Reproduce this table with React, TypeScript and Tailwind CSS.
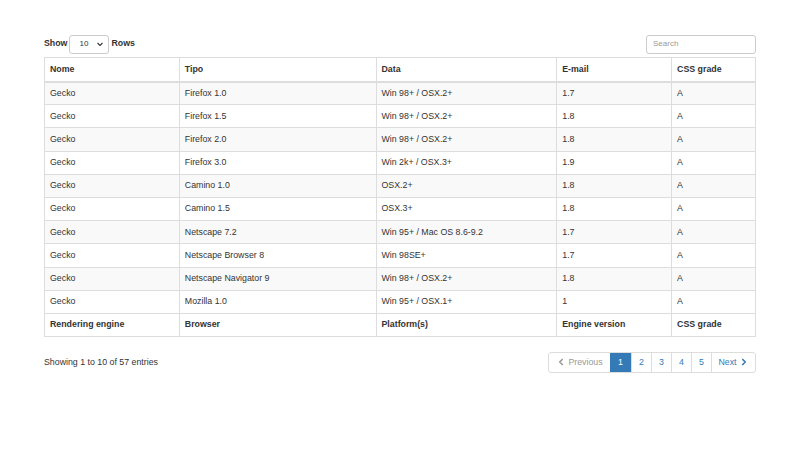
import React from "react";
import { ChevronLeft, ChevronRight } from "lucide-react";

const rows = [
  ["Gecko", "Firefox 1.0", "Win 98+ / OSX.2+", "1.7", "A"],
  ["Gecko", "Firefox 1.5", "Win 98+ / OSX.2+", "1.8", "A"],
  ["Gecko", "Firefox 2.0", "Win 98+ / OSX.2+", "1.8", "A"],
  ["Gecko", "Firefox 3.0", "Win 2k+ / OSX.3+", "1.9", "A"],
  ["Gecko", "Camino 1.0", "OSX.2+", "1.8", "A"],
  ["Gecko", "Camino 1.5", "OSX.3+", "1.8", "A"],
  ["Gecko", "Netscape 7.2", "Win 95+ / Mac OS 8.6-9.2", "1.7", "A"],
  ["Gecko", "Netscape Browser 8", "Win 98SE+", "1.7", "A"],
  ["Gecko", "Netscape Navigator 9", "Win 98+ / OSX.2+", "1.8", "A"],
  ["Gecko", "Mozilla 1.0", "Win 95+ / OSX.1+", "1", "A"],
];

const head = ["Nome", "Tipo", "Data", "E-mail", "CSS grade"];
const foot = ["Rendering engine", "Browser", "Platform(s)", "Engine version", "CSS grade"];
const widths = ["w-[135px]", "w-[197px]", "w-[181px]", "w-[115px]", "w-[84px]"];

export default function App() {
  return (
    <div className="w-[800px] h-[450px] bg-white text-[#333] text-[8.8px] font-['Liberation_Sans',Arial,sans-serif]">
      <div className="px-[44px] pt-[35px]">
        {/* --- top controls --- */}
        <div className="flex items-center justify-between h-[18px]">
          <div className="flex items-center gap-[2px] font-bold">
            <span>Show</span>
            <div className="flex items-center justify-between w-[40px] h-[19px] border border-[#ccc] rounded-[3px] pl-[9px] pr-[4px] font-normal text-[8px]">
              <span>10</span>
              <svg width="8" height="8" viewBox="0 0 8 8">
                <path d="M1.5 3 L4 5.5 L6.5 3" fill="none" stroke="#333" strokeWidth="1.1" />
              </svg>
            </div>
            <span>Rows</span>
          </div>
          <div className="w-[110px] h-[19px] border border-[#ccc] rounded-[3px] flex items-center px-[6px] text-[8px] text-[#999]">
            Search
          </div>
        </div>

        {/* --- table --- */}
        <table className="mt-[4px] border-collapse border border-[#ddd]">
          <thead>
            <tr className="h-[24px]">
              {head.map((h, i) => (
                <th key={i} className={`${widths[i]} border border-[#ddd] border-b-2 px-[5px] text-left font-bold`}>
                  {h}
                </th>
              ))}
            </tr>
          </thead>
          <tbody>
            {rows.map((r, ri) => (
              <tr key={ri} className={`h-[23.2px] ${ri % 2 === 0 ? "bg-[#f9f9f9]" : "bg-white"}`}>
                {r.map((c, ci) => (
                  <td key={ci} className="border border-[#ddd] px-[5px]">
                    {c}
                  </td>
                ))}
              </tr>
            ))}
          </tbody>
          <tfoot>
            <tr className="h-[23px]">
              {foot.map((f, i) => (
                <th key={i} className="border border-[#ddd] px-[5px] text-left font-bold">
                  {f}
                </th>
              ))}
            </tr>
          </tfoot>
        </table>

        {/* --- bottom info + pagination --- */}
        <div className="mt-[15px] flex items-center justify-between">
          <span>Showing 1 to 10 of 57 entries</span>
          <div className="flex h-[21px] border border-[#ddd] rounded-[3px] overflow-hidden">
            <span className="flex items-center gap-[2px] w-[61px] justify-center text-[#999]">
              <ChevronLeft size={10} strokeWidth={4} />
              Previous
            </span>
            <span className="flex items-center justify-center w-[21px] bg-[#337ab7] text-white">1</span>
            {["2", "3", "4", "5"].map((p) => (
              <span key={p} className="flex items-center justify-center w-[20px] border-l border-[#ddd] text-[#337ab7]">
                {p}
              </span>
            ))}
            <span className="flex items-center gap-[2px] justify-center w-[44px] border-l border-[#ddd] text-[#337ab7]">
              Next
              <ChevronRight size={10} strokeWidth={4} />
            </span>
          </div>
        </div>
      </div>
    </div>
  );
}
